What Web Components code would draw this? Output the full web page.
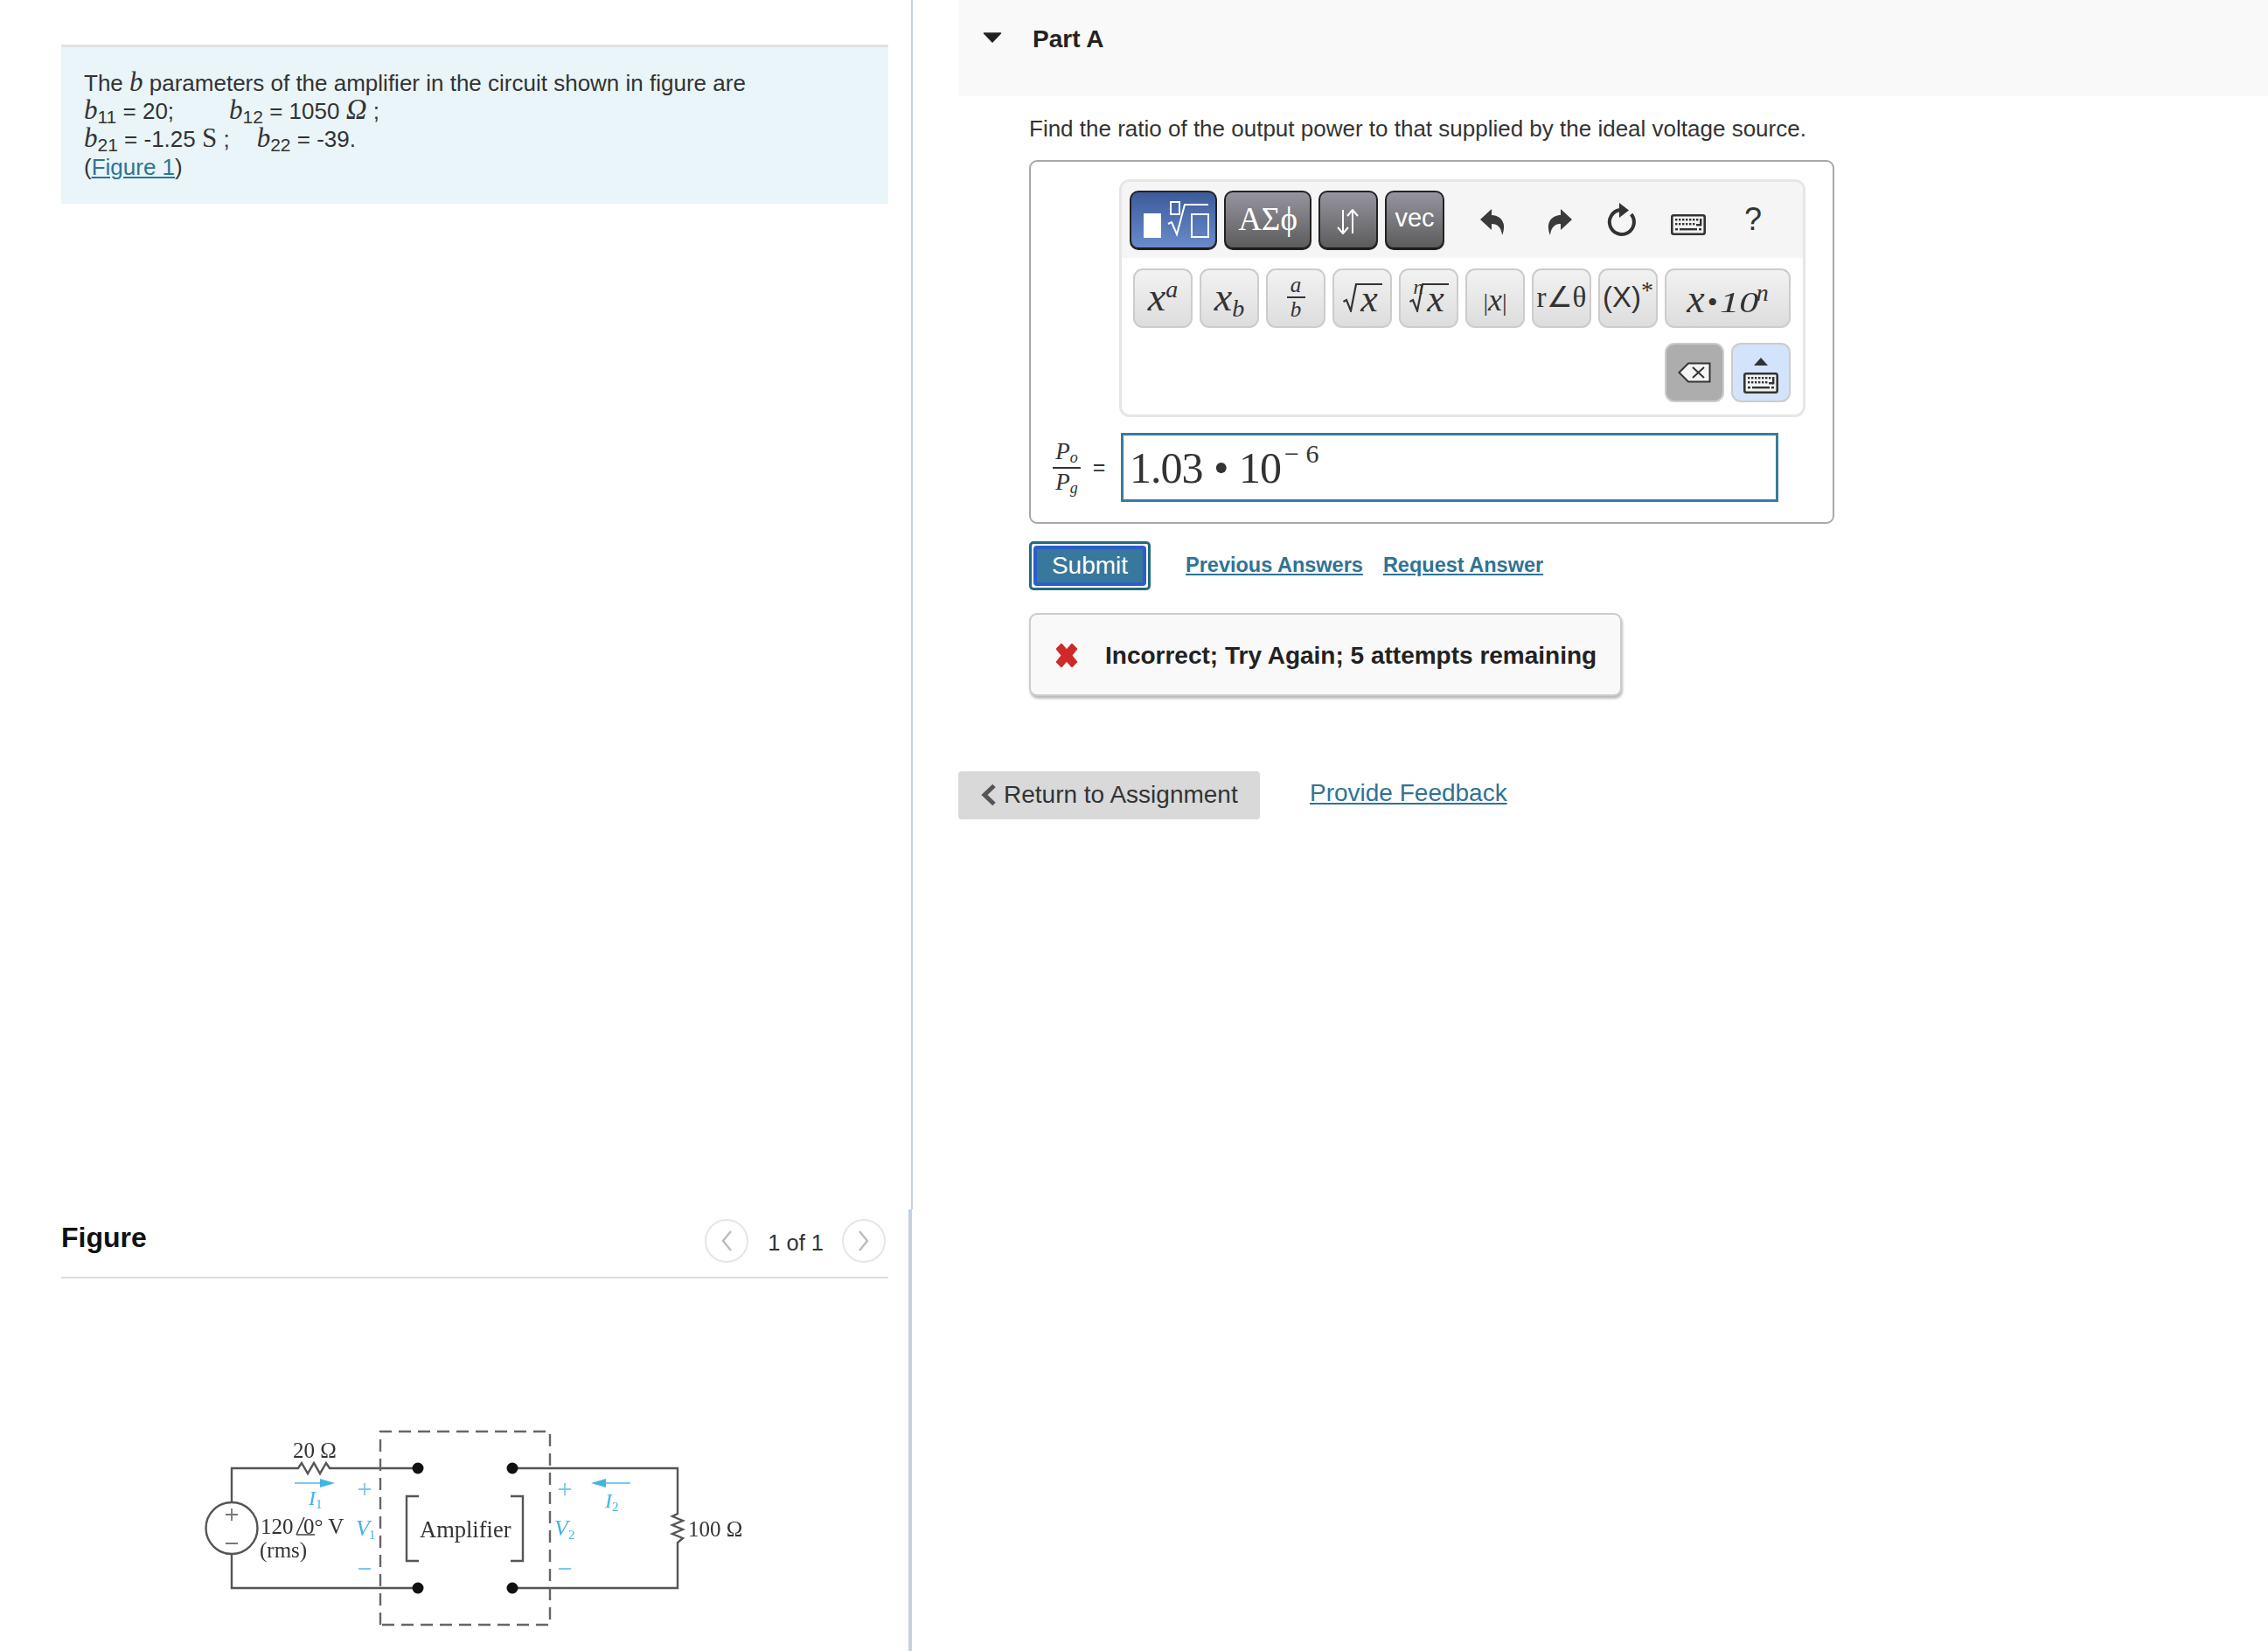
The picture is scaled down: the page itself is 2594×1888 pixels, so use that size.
<!DOCTYPE html>
<html><head><meta charset="utf-8">
<style>
html,body{margin:0;padding:0;background:#fff}
body{font-family:"Liberation Sans",Arial,sans-serif;color:#333;font-size:26px}
</style></head><body>
<mp-app></mp-app>
<script>
const def=(name,html)=>{customElements.define(name,class extends HTMLElement{constructor(){super();this.attachShadow({mode:'open'}).innerHTML=html}})};

const KB=`<svg viewBox="0 0 40 24" width="40" height="24" style="display:block"><rect x="1.300" y="1.300" width="37.400" height="21.400" rx="2" fill="#f4f4f4" stroke="#333" stroke-width="2.600"/><g fill="#333"><rect x="5" y="5" width="2.400" height="2.400"/><rect x="9" y="5" width="2.400" height="2.400"/><rect x="13" y="5" width="2.400" height="2.400"/><rect x="17" y="5" width="2.400" height="2.400"/><rect x="21" y="5" width="2.400" height="2.400"/><rect x="25" y="5" width="2.400" height="2.400"/><rect x="29" y="5" width="2.400" height="2.400"/><rect x="33" y="5" width="2.400" height="8.400"/><rect x="5" y="10" width="2.400" height="2.400"/><rect x="9" y="10" width="2.400" height="2.400"/><rect x="13" y="10" width="2.400" height="2.400"/><rect x="17" y="10" width="2.400" height="2.400"/><rect x="21" y="10" width="2.400" height="2.400"/><rect x="25" y="10" width="2.400" height="2.400"/><rect x="29" y="11" width="5" height="2.400"/><rect x="5" y="16" width="3" height="2.400"/><rect x="10" y="16" width="20" height="2.400"/><rect x="32" y="16" width="3" height="2.400"/></g></svg>`;

const RAD=`<svg width="16" height="33" viewBox="0 0 16 33" style="display:block;flex:none"><path d="M.5 21l3.500-2 5 12.500L15 1.100h1" fill="none" stroke="#333" stroke-width="2.200"/></svg>`;

def('mp-figure-nav',`<style>
:host{display:flex;align-items:center;font-size:25.500px;color:#333;padding-right:3px}
.c{width:46px;height:46px;border:2px solid #e6e6e6;border-radius:50%;display:flex;align-items:center;justify-content:center}
span{margin:0 21px 0 22px;position:relative;top:2px}
</style>
<div class="c"><svg width="14" height="26" viewBox="0 0 14 26"><path d="M12 2 3 13l9 11" fill="none" stroke="#bbb" stroke-width="2.400"/></svg></div><span>1 of 1</span>
<div class="c"><svg width="14" height="26" viewBox="0 0 14 26"><path d="M2 2l9 11-9 11" fill="none" stroke="#bbb" stroke-width="2.400"/></svg></div>`);

def('mp-circuit',`<style>
:host{display:block;width:640px;height:240px}
svg{display:block;filter:blur(.6px)}
text{font-family:"Liberation Serif",serif;fill:#333}
.b{fill:#45b3e6}
</style>
<svg width="640" height="240" viewBox="225 1630 640 240">
<g fill="none" stroke="#555" stroke-width="2.400">
<path d="M265 1719V1680H341l4-6 7 12 7-12 7 12 7-12 4 6H478"/>
<path d="M265 1778V1817H478"/>
<path d="M586 1680H775V1732l-6 3 12 5-12 5 12 5-12 5 12 5-6 5V1817H586"/>
<circle cx="265" cy="1748.500" r="29.500" stroke-width="2.400"/>
<path d="M479 1712H465V1786H479M584 1712H598V1786H584"/>
<path d="M435 1859V1638H629V1859H435" stroke="#666" stroke-dasharray="14 8"/>
</g>
<g fill="#111"><circle cx="478" cy="1680" r="6.500"/><circle cx="586" cy="1680" r="6.500"/><circle cx="478" cy="1817" r="6.500"/><circle cx="586" cy="1817" r="6.500"/></g>
<g fill="none" stroke="#777" stroke-width="1.800"><path d="M258 1733h14M265 1726v14M258 1766h14"/></g>
<text x="335" y="1668" font-size="25">20 Ω</text>
<text x="298" y="1755" font-size="25">120</text><path d="M339 1756l9-20M339 1756h21" fill="none" stroke="#444" stroke-width="1.600"/><text x="347" y="1755" font-size="25">0° V</text>
<text x="297" y="1782" font-size="25">(rms)</text>
<text x="480" y="1759" font-size="26.500">Amplifier</text>
<text x="787" y="1758" font-size="25">100 Ω</text>
<g fill="none" stroke="#7cc8ec" stroke-width="1.800"><path d="M337 1697h30M721 1697h-32M410 1704h14M417 1697v14M410 1795h14M639 1704h14M646 1697v14M639 1795h14"/></g>
<path class="b" d="M383 1697l-17-5v10zM676 1697l17-5v10z"/>
<text class="b" x="353" y="1722" font-size="24" font-style="italic">I</text><text class="b" x="361" y="1726" font-size="15">1</text>
<text class="b" x="692" y="1725" font-size="24" font-style="italic">I</text><text class="b" x="700" y="1729" font-size="15">2</text>
<text class="b" x="407" y="1757" font-size="26" font-style="italic">V</text><text class="b" x="422" y="1761" font-size="15">1</text>
<text class="b" x="634" y="1757" font-size="26" font-style="italic">V</text><text class="b" x="650" y="1761" font-size="15">2</text>
</svg>`);

def('mp-left',`<style>
:host{display:flex;flex-direction:column;width:1038px;height:1888px;box-sizing:border-box;position:relative;padding:51px 22px 0 70px;flex:none}
:host::after{content:"";position:absolute;right:-6px;top:0;width:2px;height:1383px;background:#c4d0e0}
:host::before{content:"";position:absolute;right:-5px;top:1383px;width:4px;height:505px;background:#c4d0e0}
.info{background:#e9f5f8;border-top:3px solid #dfe2e3;height:182px;box-sizing:border-box;padding:25px 26px 0;line-height:32px}
.info div{height:32px;white-space:nowrap}
i.m{font-family:"Liberation Serif",serif;font-size:31px;line-height:0}
.r{font-family:"Liberation Serif",serif;line-height:0}
sub{font-size:21px;line-height:0;vertical-align:baseline;position:relative;top:5px}
a{color:#2f7396;text-decoration:underline}
.head{display:flex;justify-content:space-between;align-items:center;margin-top:1160px;height:52px;padding-bottom:15px;border-bottom:2px solid #dcdcdc}
h2{margin:0;font-size:32px;color:#111;line-height:52px;position:relative;top:-4px}
mp-circuit{margin:167px 0 0 155px}
</style>
<div class="info">
<div>The <i class="m">b</i> parameters of the amplifier in the circuit shown in figure are</div>
<div><i class="m">b</i><sub>11</sub> = 20;<span style="display:inline-block;width:63px"></span><i class="m">b</i><sub>12</sub> = 1050 <span class="r" style="font-size:33px;font-style:italic">Ω</span> ;</div>
<div><i class="m">b</i><sub>21</sub> = -1.25 <span class="r" style="font-size:31px">S</span> ;<span style="display:inline-block;width:31px"></span><i class="m">b</i><sub>22</sub> = -39.</div>
<div>(<a href="#">Figure 1</a>)</div>
</div>
<div class="head"><h2>Figure</h2><mp-figure-nav></mp-figure-nav></div>
<mp-circuit></mp-circuit>`);

def('mp-tool',`<style>
:host{display:flex;align-items:center;justify-content:center;box-sizing:border-box;height:68px;border-radius:10px;font-family:"Liberation Serif",serif;color:#fff;flex:none;
 border:2px solid #222;background:linear-gradient(#96959f,#5b5b5b);font-size:37px;box-shadow:inset 0 -1px 0 #111;padding-bottom:4px}
:host([blue]){background:linear-gradient(#3c5b9b,#6a8ccb);padding:0}
:host([sans]){font-family:"Liberation Sans",sans-serif;font-size:29px;padding-bottom:5px}
:host([arrows]){padding:2px 0 0}
</style><slot></slot>`);

def('mp-key',`<style>
:host{display:flex;align-items:center;justify-content:center;box-sizing:border-box;height:68px;width:68px;border-radius:11px;font-family:"Liberation Serif",serif;color:#333;flex:none;
 border:2.500px solid #ccc;background:linear-gradient(#f2f2f2,#dddddd);font-size:36px}
:host([wide]){width:144px}
:host([grey]){background:#adadad}
:host([pale]){background:#d2e3fb}
</style><slot></slot>`);

def('mp-toolbar',`<style>
:host{display:block;box-sizing:border-box;width:785px;height:272px;border:3px solid #e6e6e6;border-radius:12px;background:#fff;overflow:hidden;flex:none}
.top{display:flex;align-items:center;background:#f5f5f5;height:87px;padding:10px 0 9px 9px;box-sizing:border-box;gap:8px}
.ic{flex:none;display:flex;align-items:center;justify-content:center;height:68px;box-sizing:border-box}
.row{display:flex;gap:8px;padding:0 0 0 13px}
.r2{margin-top:12px}
.r3{margin-top:17px;justify-content:flex-end;padding-right:14px}
i{font-style:italic;font-family:"Liberation Serif",serif}
.frac{display:inline-flex;flex-direction:column;align-items:center;font-size:25px;font-style:italic;position:relative;top:-1px}
.frac b{display:block;width:21px;height:2px;background:#333}
.frac span{display:block;line-height:26px;height:26px}
.root{display:inline-flex;align-items:flex-start;position:relative;top:0}
.root span.x{font-style:italic;font-size:44px;border-top:2px solid #333;line-height:31px;height:32px;width:29px;text-align:center;display:block}
.root span.n{position:absolute;font-style:italic;font-size:23px;left:5px;top:-5px;line-height:20px}
.xa{font-style:italic;font-size:46px;line-height:1;white-space:nowrap;position:relative;top:-1px}
.xa sup{font-size:28px;line-height:0;vertical-align:15px}
.xa sub{font-size:28px;line-height:0;vertical-align:-7px}
.ten{font-style:italic;font-size:46px;white-space:nowrap;display:flex;align-items:baseline;position:relative}
.ten .d{display:inline-block;font-size:33px;width:40px;transform:scaleX(1.35);transform-origin:left}
.ten .dot{font-style:normal;font-size:34px;margin:0 2px 0 3px}
.ten .p{font-size:28px;line-height:1;margin-left:2px;position:relative;top:-13px}
</style>
<div class="top">
<mp-tool blue style="width:100px"><svg width="96" height="64" viewBox="0 0 96 64"><rect x="14" y="24" width="20" height="28" fill="#fff"/><path d="M42 36l4-2 6 14 9-34h27" fill="none" stroke="#fff" stroke-width="2"/><rect x="45" y="11" width="10" height="14" fill="none" stroke="#fff" stroke-width="2"/><rect x="69" y="25" width="19" height="26" fill="none" stroke="#fff" stroke-width="2"/></svg></mp-tool>
<mp-tool style="width:100px">ΑΣϕ</mp-tool>
<mp-tool arrows style="width:68px"><svg width="26" height="29" viewBox="0 0 26 29"><path d="M7 1v27M1 21l6 7 6-7M18 28V1M12 8l6-7 6 7" fill="none" stroke="#fff" stroke-width="2"/></svg></mp-tool>
<mp-tool sans style="width:68px">vec</mp-tool>
<div class="ic" style="width:28px;margin-left:33px;padding-top:2px"><svg width="28" height="31" viewBox="0 0 28 31"><path d="M0 13 13 1v7c9 0 15 7 14 15-.2 3-1 6-2 8-1-9-5-13-12-13v7z" fill="#3a3a3a"/></svg></div>
<div class="ic" style="width:28px;margin-left:41px;padding-top:2px"><svg width="28" height="31" viewBox="0 0 28 31"><path d="M28 13 15 1v7C6 8 0 15 1 23c.2 3 1 6 2 8 1-9 5-13 12-13v7z" fill="#3a3a3a"/></svg></div>
<div class="ic" style="width:34px;margin-left:32px"><svg width="34" height="40" viewBox="0 0 34 40"><path d="M27.700 13A14 14 0 1 1 15 8" fill="none" stroke="#333" stroke-width="4"/><path d="M14 0l11 8.500L14 17z" fill="#333"/></svg></div>
<div class="ic" style="width:40px;margin-left:31px;padding-top:10px">${KB}</div>
<div class="ic" style="width:24px;margin-left:34px;font-size:36px;color:#333;padding-bottom:2px">?</div>
</div>
<div class="row r2">
<mp-key><span class="xa">x<sup>a</sup></span></mp-key>
<mp-key><span class="xa">x<sub>b</sub></span></mp-key>
<mp-key><span class="frac"><span>a</span><b></b><span>b</span></span></mp-key>
<mp-key><span class="root">${RAD}<span class="x">x</span></span></mp-key>
<mp-key><span class="root"><span class="n">n</span>${RAD}<span class="x">x</span></span></mp-key>
<mp-key><span style="font-size:28px;position:relative;top:2px">|<i style="font-size:36px">x</i>|</span></mp-key>
<mp-key><span style="font-size:33px;position:relative;top:-2px">r∠θ</span></mp-key>
<mp-key><span style="font-family:'Liberation Sans',sans-serif;font-size:33px;position:relative;top:-1px;white-space:nowrap">(X)<sup style="font-family:'Liberation Serif',serif;font-size:28px;vertical-align:10px;line-height:0">*</sup></span></mp-key>
<mp-key wide><span class="ten">x<span class="dot">•</span><span class="d">10</span><span class="p">n</span></span></mp-key>
</div>
<div class="row r3">
<mp-key grey><svg width="38" height="24" viewBox="0 0 38 24"><path d="M1.500 12 12 1.500H36.500V22.500H12z" fill="#f4f4f4" stroke="#333" stroke-width="2"/><path d="M17 6l13 12M30 6 17 18" stroke="#333" stroke-width="2"/></svg></mp-key>
<mp-key pale><span style="display:flex;flex-direction:column;align-items:center;gap:8px;padding-top:7px"><svg width="16" height="9" viewBox="0 0 16 9" style="display:block"><path d="M8 0l8 9H0z" fill="#333"/></svg>${KB}</span></mp-key>
</div>`);

def('mp-answer',`<style>
:host{display:block;box-sizing:border-box;width:921px;height:416px;border:2px solid #a8a8a8;border-radius:9px;padding:20px 0 0 101px}
.eq{display:flex;align-items:center;margin:18px 0 0 -76px}
.fr{font-family:"Liberation Serif",serif;font-style:italic;font-size:27px;width:32px;display:flex;flex-direction:column;align-items:center;color:#333;flex:none}
.fr span{display:block;line-height:30px;height:33px;white-space:nowrap}
.fr sub{font-size:18px;line-height:0;vertical-align:-4px}
.fr b{display:block;width:32px;height:2px;background:#333}
.e{margin:0 17px 0 13px;font-size:25px;flex:none;width:16px;text-align:center}
.in{box-sizing:border-box;width:752px;height:79px;border:3px solid #3a7c9f;font-family:"Liberation Serif",serif;font-size:50px;letter-spacing:-1px;word-spacing:1px;color:#333;padding:0 0 0 7px;line-height:75px;white-space:nowrap}
.in sup{font-size:30px;line-height:0;letter-spacing:0;word-spacing:0;vertical-align:23px;margin-left:4px}
</style>
<mp-toolbar></mp-toolbar>
<div class="eq"><div class="fr"><span>P<sub>o</sub></span><b></b><span>P<sub>g</sub></span></div><div class="e">=</div><div class="in">1.03 • 10<sup>− 6</sup></div></div>`);

def('mp-right',`<style>
:host{display:flex;flex-direction:column;flex:none;width:1498px;margin-left:58px}
a{color:#2f7396;text-decoration:underline}
.part{height:110px;background:#f9f9f9;display:flex;align-items:center;padding:0 0 0 28px;box-sizing:border-box}
.part svg{flex:none;position:relative;top:-12px}
.part b{font-size:28px;color:#222;margin-left:35px;position:relative;top:-10px}
.body{padding:0 0 0 81px}
p{margin:20px 0 0;line-height:34px;height:53px}
.act{display:flex;align-items:center;margin-top:20px;height:56px;font-size:23.500px;font-weight:bold}
.act a{position:relative;top:-1px}
.sub{box-sizing:border-box;width:139px;height:56px;border:3px solid #24697f;border-radius:5px;background:#fff;padding:2px;margin-right:40px}
.sub div{box-sizing:border-box;height:46px;border:4px solid #2c5ecb;border-radius:4px;background:#38789d;color:#fff;font-weight:normal;font-size:28px;display:flex;align-items:center;justify-content:center}
.act a+a{margin-left:23px}
.bad{box-sizing:border-box;width:678px;height:95px;margin-top:26px;border:2.500px solid #ccc;border-radius:9px;background:#f9f9f9;box-shadow:1px 3px 3px #bbb;display:flex;align-items:center;padding:2px 0 0 27px;font-weight:bold;font-size:28px;color:#222;white-space:nowrap}
.bad svg{margin-right:30px;flex:none}
.bot{display:flex;align-items:center;margin-top:86px}
.ret{box-sizing:border-box;width:345px;height:55px;background:#d9d9d9;border-radius:4px;display:flex;align-items:center;padding:0 0 2px 25px;font-size:28px;color:#333;white-space:nowrap}
.ret svg{margin-right:7px}
.fb{margin-left:57px;font-size:28px;position:relative;top:-3px}
</style>
<div class="part"><svg width="22" height="12" viewBox="0 0 22 12"><path d="M1.500 1h19L11 11z" fill="#222" stroke="#222" stroke-width="1.500" stroke-linejoin="round"/></svg><b>Part A</b></div>
<div class="body">
<p>Find the ratio of the output power to that supplied by the ideal voltage source.</p>
<mp-answer></mp-answer>
<div class="act"><div class="sub"><div>Submit</div></div><a href="#">Previous Answers</a><a href="#">Request Answer</a></div>
<div class="bad"><svg width="28" height="27" viewBox="0 0 28 27"><path d="M3 6l5-5 6 7 6-7 5 5-6 7.500 6 7.500-5 5-6-7-6 7-5-5 6-7.500z" fill="#cf2a2a" stroke="#cf2a2a" stroke-width="2.400" stroke-linejoin="round"/></svg>Incorrect; Try Again; 5 attempts remaining</div>
</div>
<div class="bot"><div class="ret"><svg width="20" height="26" viewBox="0 0 20 26"><path d="M16 2.500 5 13l11 10.500" fill="none" stroke="#555" stroke-width="5"/></svg>Return to Assignment</div><a class="fb" href="#">Provide Feedback</a></div>`);

def('mp-app',`<style>:host{display:flex;width:2594px;height:1888px;overflow:hidden}</style><mp-left></mp-left><mp-right></mp-right>`);
</script>
</body></html>
